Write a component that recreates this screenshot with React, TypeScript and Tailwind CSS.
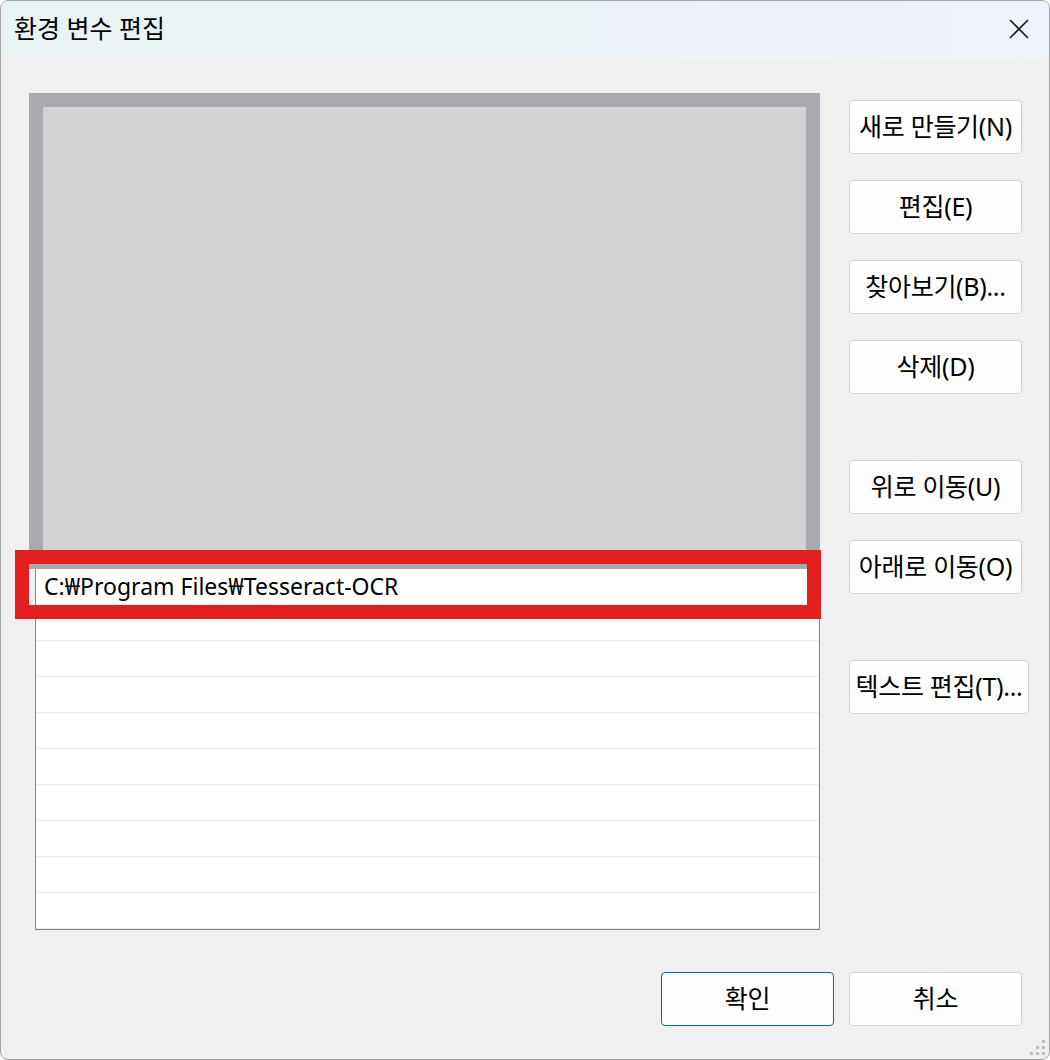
import React from 'react';

const font = { fontFamily: '"Noto Sans", "Noto Sans CJK KR", sans-serif' };

function DlgButton({ label, primary = false, wide = false }: { label: string; primary?: boolean; wide?: boolean }) {
    return (
        <button
            className={
                'h-[54px] rounded-[4px] bg-[#fdfdfd] text-[25px] text-black flex items-center justify-center whitespace-nowrap tracking-[-0.3px] ' +
                (wide ? 'w-[180px] ' : 'w-[173px] ') +
                (primary ? 'border border-[#0067c0]' : 'border border-[#d0d0d0]')
            }
        >
            {label}
        </button>
    );
}

export default function App() {
    const rows = Array.from({ length: 23 }, (_, i) => i);

    return (
        <div className="w-[1050px] h-[1060px] bg-white" style={font}>
            <div className="w-full h-full flex flex-col border border-[#a3a3a3] rounded-[8px] overflow-hidden bg-[#f0f0f0] relative">
                {/* Title bar */}
                <div className="h-[57px] shrink-0 flex items-center justify-between pl-[13px] pr-[20px] bg-gradient-to-r from-[#e9f3f3] to-[#eef2fa]">
                    <span className="text-[25px] text-black leading-none pb-[2px]">환경 변수 편집</span>
                    <svg width="20" height="20" viewBox="0 0 20 20" className="mb-[2px]">
                        <path d="M1 1L19 19M19 1L1 19" stroke="#1a1a1a" strokeWidth="1.6" />
                    </svg>
                </div>

                {/* Body */}
                <div className="relative flex-1 flex flex-col">
                    <div className="flex pt-[42px]">
                        {/* List */}
                        <div className="ml-[34px] w-[785px] h-[830px] border border-[#80868c] bg-white flex flex-col">
                            {rows.map((i) => (
                                <div key={i} className="h-[36px] shrink-0 border-b border-[#ececec] flex items-center pl-[8px] text-[23px] text-black">
                                    {i === 13 ? 'C:₩Program Files₩Tesseract-OCR' : ''}
                                </div>
                            ))}
                        </div>

                        {/* Side buttons */}
                        <div className="ml-[29px] flex flex-col">
                            <DlgButton label="새로 만들기(N)" />
                            <div className="mt-[26px]"><DlgButton label="편집(E)" /></div>
                            <div className="mt-[26px]"><DlgButton label="찾아보기(B)..." /></div>
                            <div className="mt-[26px]"><DlgButton label="삭제(D)" /></div>
                            <div className="mt-[66px]"><DlgButton label="위로 이동(U)" /></div>
                            <div className="mt-[26px]"><DlgButton label="아래로 이동(O)" /></div>
                            <div className="mt-[66px]"><DlgButton label="텍스트 편집(T)..." wide /></div>
                        </div>
                    </div>

                    {/* Bottom buttons */}
                    <div className="flex justify-end gap-[15px] pr-[27px] mt-[42px]">
                        <DlgButton label="확인" primary />
                        <DlgButton label="취소" />
                    </div>

                    {/* Gray redaction overlay */}
                    <div className="absolute left-[28px] top-[35px] w-[791px] h-[476px] border-[14px] border-[#a9aaad] bg-[#d2d3d5]" />

                    {/* Red highlight */}
                    <div className="absolute left-[14px] top-[492px] w-[806px] h-[69px] border-[14px] border-[#e31e1e]" />
                </div>

                {/* Resize grip */}
                <svg width="16" height="16" viewBox="0 0 16 16" className="absolute right-[3px] bottom-[3px]">
                    <rect x="12" y="0" width="3" height="3" fill="#bdbdbd" />
                    <rect x="6" y="6" width="3" height="3" fill="#bdbdbd" />
                    <rect x="12" y="6" width="3" height="3" fill="#bdbdbd" />
                    <rect x="0" y="12" width="3" height="3" fill="#bdbdbd" />
                    <rect x="6" y="12" width="3" height="3" fill="#bdbdbd" />
                    <rect x="12" y="12" width="3" height="3" fill="#bdbdbd" />
                </svg>
            </div>
        </div>
    );
}
